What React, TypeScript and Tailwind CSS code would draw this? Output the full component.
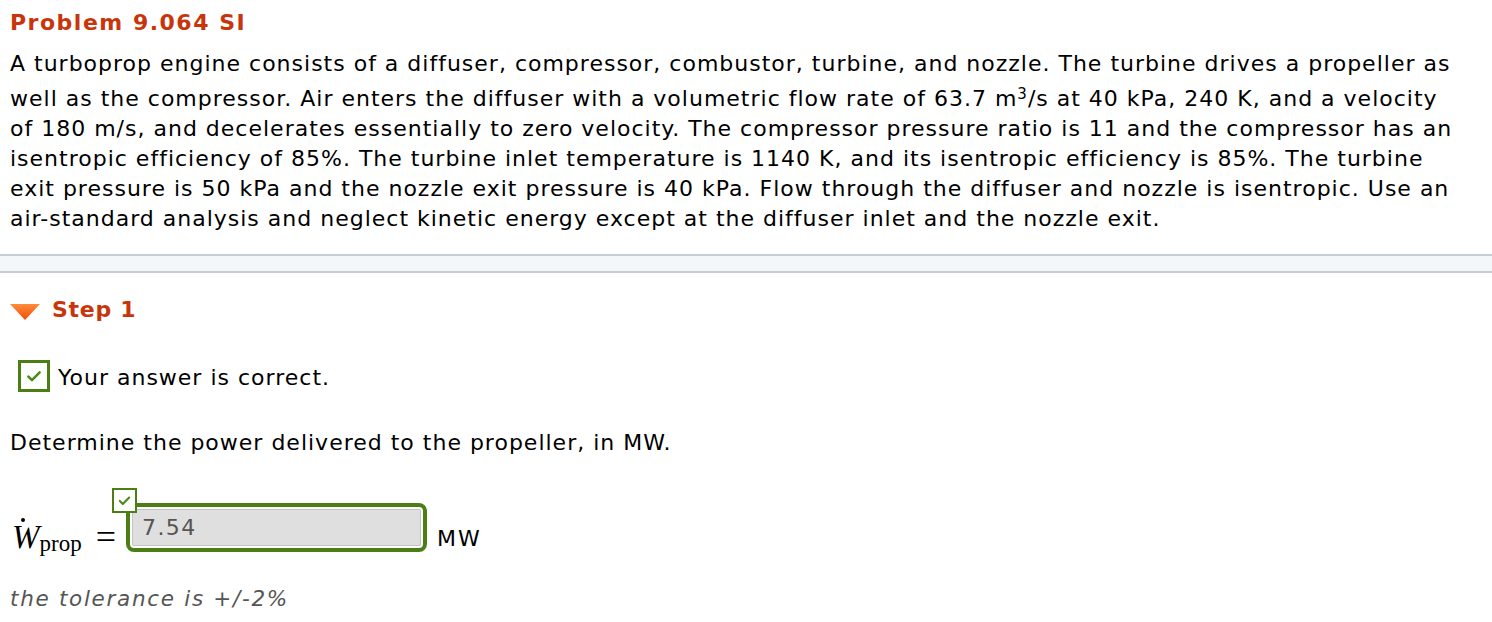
import React from 'react';

const sans = "font-['DejaVu_Sans','Verdana',sans-serif]";
const body = 'text-[22px] leading-[30px] tracking-[1px]';

function CheckBox({ size }: { size: 'lg' | 'sm' }) {
  const box = size === 'lg' ? 'w-[32px] h-[32px] border-[3px]' : 'w-[25px] h-[25px] border-2';
  const icon = size === 'lg' ? 18 : 15;
  return (
    <div className={`${box} border-[#4b7f14] bg-white flex items-center justify-center shrink-0`}>
      <svg width={icon} height={icon} viewBox="0 0 16 16" fill="none">
        <path d="M3 8.5l3.2 3.2L13 4.8" stroke="#4b8a16" strokeWidth="2.2" strokeLinecap="round" strokeLinejoin="round" />
      </svg>
    </div>
  );
}

export default function App() {
  return (
    <div className={`${sans} bg-white text-black w-[1492px] h-[622px] overflow-hidden`}>
      {/* Problem statement */}
      <div className="px-[10px] pt-[8px]">
        <h1 className="text-[#c8350b] font-bold text-[22px] leading-[30px] tracking-[1.5px]">Problem 9.064 SI</h1>
        <div className={`${body} mt-[11px] whitespace-nowrap`}>
          <div>A turboprop engine consists of a diffuser, compressor, combustor, turbine, and nozzle. The turbine drives a propeller as</div>
          <div className="pt-[5px]">
            well as the compressor. Air enters the diffuser with a volumetric flow rate of 63.7 m<sup className="text-[15px]">3</sup>/s at 40 kPa, 240 K, and a velocity
          </div>
          <div>of 180 m/s, and decelerates essentially to zero velocity. The compressor pressure ratio is 11 and the compressor has an</div>
          <div>isentropic efficiency of 85%. The turbine inlet temperature is 1140 K, and its isentropic efficiency is 85%. The turbine</div>
          <div>exit pressure is 50 kPa and the nozzle exit pressure is 40 kPa. Flow through the diffuser and nozzle is isentropic. Use an</div>
          <div>air-standard analysis and neglect kinetic energy except at the diffuser inlet and the nozzle exit.</div>
        </div>
      </div>

      {/* Separator */}
      <div className="mt-[20px] h-[19px] bg-[#f4f7fa] border-y-2 border-[#c6cdd7]" />

      {/* Step 1 */}
      <div className="px-[10px]">
        <div className="flex items-center gap-[12px] mt-[22px] h-[30px]">
          <svg width="30" height="17" viewBox="0 0 30 17" className="mt-[2px]">
            <defs>
              <linearGradient id="tri" x1="0" y1="0" x2="0" y2="1">
                <stop offset="0" stopColor="#ff8c3c" />
                <stop offset="1" stopColor="#f04d08" />
              </linearGradient>
            </defs>
            <path d="M0 1h30L15 17z" fill="url(#tri)" />
          </svg>
          <span className="text-[#c8350b] font-bold text-[22px] leading-[30px] tracking-[0.7px]">Step 1</span>
        </div>

        <div className="flex items-center gap-[8px] mt-[35px] pl-[8px] h-[32px]">
          <CheckBox size="lg" />
          <span className={`${body} mt-[3px]`}>Your answer is correct.</span>
        </div>

        <p className={`${body} mt-[36px]`}>Determine the power delivered to the propeller, in MW.</p>

        {/* Answer row */}
        <div className="flex items-end mt-[30px] h-[64px]">
          <div className="flex items-baseline font-['Liberation_Serif','Times_New_Roman',serif] leading-[32px] mb-[-5px] pl-[2px]">
            <span className="relative italic text-[33px]">
              W
              <span className="absolute left-[9px] top-[-3px] w-[4px] h-[4px] rounded-full bg-black" />
            </span>
            <span className="text-[23px] relative top-[3px]">prop</span>
            <span className="ml-[14px] text-[36px] relative top-[1px]">=</span>
          </div>
          <div className="relative ml-[10px] pt-[15px]">
            <div className="absolute left-[-14px] top-0 z-10">
              <CheckBox size="sm" />
            </div>
            <div className="w-[301px] h-[49px] rounded-[8px] border-[4px] border-[#4b7f14] bg-white p-[2px]">
              <div className="h-full rounded-[2px] border border-[#c4c4c4] bg-[#dfdfdf] pl-[9px] text-[#555] text-[22px] leading-[36px] tracking-[1.4px]">
                7.54
              </div>
            </div>
          </div>
          <span className={`${body} ml-[10px] mb-[-2px] tracking-[2px]`}>MW</span>
        </div>

        <p className={`italic text-[#555] text-[21.5px] leading-[30px] tracking-[1.7px] mt-[32px]`}>the tolerance is +/-2%</p>
      </div>
    </div>
  );
}
